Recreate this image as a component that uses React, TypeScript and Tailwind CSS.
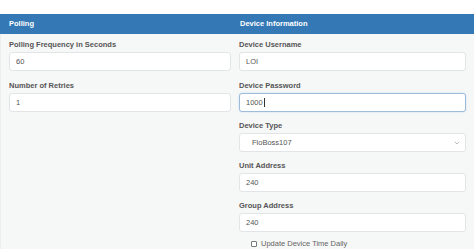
import { ChevronDown } from "lucide-react";

const font = { fontFamily: '"Liberation Sans", Arial, sans-serif' };

const Field = ({ label, value, focused }: { label: string; value: string; focused?: boolean }) => (
  <div className="mb-[9px]">
    <div className="h-[9px] leading-[9px] mb-[3px] text-[7.5px] font-bold text-[#555]">{label}</div>
    <div
      className={
        "h-[19px] flex items-center pl-[6px] bg-white rounded-[3px] text-[7.5px] text-[#555] border " +
        (focused ? "border-[#9cbcd9] shadow-[0_0_2px_#c6dbee]" : "border-[#e2e5e7]")
      }
    >
      {value}
      {focused && <span className="w-px h-[9px] bg-[#333] ml-px" />}
    </div>
  </div>
);

export default function App() {
  return (
    <div className="w-[474px] h-[251px] bg-white pt-[14px] overflow-hidden" style={font}>
      <div className="grid grid-cols-[233px_241px] h-[234px]">
        <div className="flex flex-col">
          <div className="h-[20px] bg-[#3479b6] flex items-center pl-[9px] text-[7.5px] font-bold text-white">
            Polling
          </div>
          <div className="flex-1 bg-[#f6f7f7] border-l border-[#eceeef] pt-[6px] pl-[8px] pr-[2px]">
            <Field label="Polling Frequency in Seconds" value="60" />
            <div className="h-px" />
            <Field label="Number of Retries" value="1" />
          </div>
        </div>
        <div className="flex flex-col">
          <div className="h-[20px] bg-[#3479b6] flex items-center pl-[7px] text-[7.5px] font-bold text-white">
            Device Information
          </div>
          <div className="flex-1 bg-[#f6f7f7] pt-[6px] pl-[6px] pr-[8px]">
            <Field label="Device Username" value="LOI" />
            <div className="h-px" />
            <Field label="Device Password" value="1000" focused />
            <div className="mb-[9px]">
              <div className="h-[9px] leading-[9px] mb-[3px] text-[7.5px] font-bold text-[#555]">Device Type</div>
              <div className="h-[19px] flex items-center justify-between pl-[12px] pr-[4px] bg-white rounded-[3px] border border-[#e2e5e7] text-[7.5px] text-[#555]">
                <span>FloBoss107</span>
                <ChevronDown className="w-[8px] h-[8px] text-[#999]" strokeWidth={2} />
              </div>
            </div>
            <Field label="Unit Address" value="240" />
            <Field label="Group Address" value="240" />
            <div className="flex items-center gap-[4px] pl-[12px] -mt-[3px] text-[7.5px] text-[#666]">
              <span className="w-[6px] h-[6px] border border-[#777] rounded-[1px] bg-white" />
              <span>Update Device Time Daily</span>
            </div>
          </div>
        </div>
      </div>
    </div>
  );
}
